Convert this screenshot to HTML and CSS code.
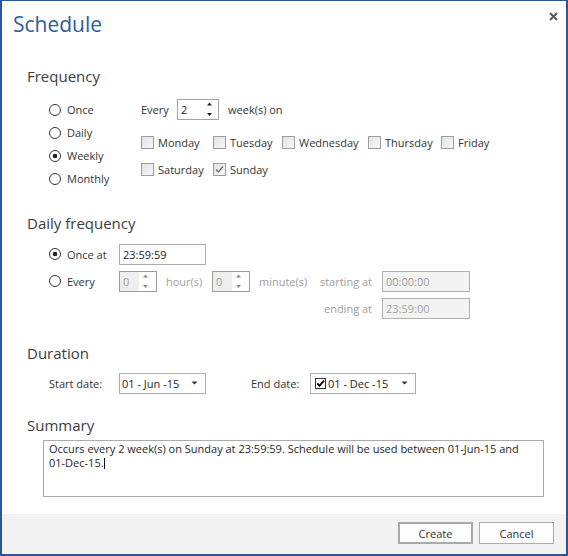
FILE: index.html
```html
<!DOCTYPE html>
<html lang="en">
<head>
<meta charset="utf-8">
<title>Schedule</title>
<link rel="stylesheet" href="styles.css">
</head>
<body>
<div class="dialog">
  <div class="titlebar">
    <h1 class="title">Schedule</h1>
    <svg class="close" width="9" height="9" viewBox="0 0 9 9" aria-label="Close"><path d="M1 1L8 8M8 1L1 8" stroke="#5a5a5a" stroke-width="2" fill="none"/></svg>
  </div>

  <div class="content">
    <section class="sec">
      <h2 class="sec-title">Frequency</h2>
      <div class="freq-body">
        <div class="radios">
          <label class="radio"><span class="rb"></span>Once</label>
          <label class="radio"><span class="rb"></span>Daily</label>
          <label class="radio"><span class="rb on"></span>Weekly</label>
          <label class="radio"><span class="rb"></span>Monthly</label>
        </div>
        <div class="weekly">
          <div class="every-row">
            <span class="every-lbl">Every</span>
            <div class="spin">
              <span class="spin-val">2</span>
              <svg class="spin-btns" width="14" height="19" viewBox="0 0 14 19"><path d="M3 5.5L5.5 2.5L8 5.5Z M3 13L5.5 16L8 13Z" fill="#222"/></svg>
            </div>
            <span class="week-lbl">week(s) on</span>
          </div>
          <div class="days">
            <label class="cb-item"><span class="cb"></span>Monday</label>
            <label class="cb-item"><span class="cb"></span>Tuesday</label>
            <label class="cb-item"><span class="cb"></span>Wednesday</label>
            <label class="cb-item"><span class="cb"></span>Thursday</label>
            <label class="cb-item"><span class="cb"></span>Friday</label>
            <label class="cb-item"><span class="cb"></span>Saturday</label>
            <label class="cb-item"><span class="cb"><svg width="11" height="11" viewBox="0 0 11 11"><path d="M2 5.5L4.3 8L9 2.5" stroke="#6e6e6e" stroke-width="1.4" fill="none"/></svg></span>Sunday</label>
          </div>
        </div>
      </div>
    </section>

    <section class="sec sec-daily">
      <h2 class="sec-title">Daily frequency</h2>
      <div class="daily-grid">
        <label class="radio"><span class="rb on"></span>Once at</label>
        <div class="tbox time">23:59:59</div>

        <label class="radio r2"><span class="rb"></span>Every</label>
        <div class="spin dis">
          <span class="spin-val">0</span>
          <svg class="spin-btns" width="17" height="19" viewBox="0 0 17 19"><path d="M4 5.5L6.5 2.5L9 5.5Z M4 13L6.5 16L9 13Z" fill="#8a8a8a"/></svg>
        </div>
        <span class="muted pad">hour(s)</span>
        <div class="spin dis">
          <span class="spin-val">0</span>
          <svg class="spin-btns" width="17" height="19" viewBox="0 0 17 19"><path d="M4 5.5L6.5 2.5L9 5.5Z M4 13L6.5 16L9 13Z" fill="#8a8a8a"/></svg>
        </div>
        <span class="muted pad">minute(s)</span>
        <span class="muted right">starting at</span>
        <div class="tbox dis">00:00:00</div>

        <span class="muted right c6">ending at</span>
        <div class="tbox dis">23:59:00</div>
      </div>
    </section>

    <section class="sec sec-dur">
      <h2 class="sec-title">Duration</h2>
      <div class="dur-row">
        <span class="dur-lbl">Start date:</span>
        <div class="date">
          <span class="date-val">01 - Jun -15</span>
          <svg class="dd" width="7" height="4" viewBox="0 0 7 4"><path d="M0.5 0.5H6.5L3.5 3.5Z" fill="#333"/></svg>
        </div>
        <span class="end-lbl">End date:</span>
        <div class="date end">
          <svg class="date-cb" width="11" height="11" viewBox="0 0 11 11"><rect x="0.5" y="0.5" width="10" height="10" fill="#fff" stroke="#333"/><path d="M2.3 5.3L4.4 7.8L9 2.6" stroke="#000" stroke-width="1.8" fill="none"/></svg>
          <span class="date-val">01 - Dec -15</span>
          <svg class="dd" width="7" height="4" viewBox="0 0 7 4"><path d="M0.5 0.5H6.5L3.5 3.5Z" fill="#333"/></svg>
        </div>
      </div>
    </section>

    <section class="sec sec-sum">
      <h2 class="sec-title">Summary</h2>
      <div class="summary-box">
        <p class="sum-line">Occurs every 2 week(s) on Sunday at 23:59:59. Schedule will be used between 01-Jun-15 and</p>
        <p class="sum-line">01-Dec-15.<span class="caret"></span></p>
      </div>
    </section>
  </div>

  <div class="footer">
    <button class="btn primary" type="button">Create</button>
    <button class="btn" type="button">Cancel</button>
  </div>
</div>
</body>
</html>
```

FILE: styles.css
```css
* { box-sizing: border-box; margin: 0; padding: 0; }
html, body { width: 568px; height: 556px; overflow: hidden; background: #fff; }
body {
  font-family: "Open Sans", "Noto Sans", sans-serif;
  font-size: 11px;
  line-height: 15px;
  color: #333;
}

.dialog {
  width: 568px;
  height: 556px;
  border: 2px solid #2b579a;
  border-top-width: 1px;
  display: flex;
  flex-direction: column;
  background: #fff;
}

/* title bar */
.titlebar {
  height: 45px;
  flex: none;
  padding: 9px 8px 0 11px;
  display: flex;
  justify-content: space-between;
  align-items: flex-start;
}
.title {
  font-size: 21px;
  line-height: 28px;
  font-weight: 400;
  color: #2e5c9e;
}
.close { display: block; margin-top: 2px; }

/* content */
.content { padding: 20px 0 0 25px; }
.sec-title {
  font-size: 15px;
  line-height: 20px;
  font-weight: 400;
  color: #3c3c3c;
}
.sec-daily { margin-top: 23px; }
.sec-dur { margin-top: 24px; }
.sec-sum { margin-top: 21px; }

/* radios & checkboxes */
.radio {
  display: flex;
  align-items: center;
  white-space: nowrap;
}
.rb {
  flex: none;
  width: 12px;
  height: 12px;
  border: 1px solid #333;
  border-radius: 50%;
  margin-right: 6px;
  background: #fff;
}
.rb.on { background: radial-gradient(circle, #222 0 2px, #fff 2.6px); }

.cb-item {
  display: flex;
  align-items: center;
  white-space: nowrap;
}
.cb {
  flex: none;
  width: 13px;
  height: 13px;
  border: 1px solid #9d9d9d;
  background: linear-gradient(135deg, #e2e2e2, #f7f7f7);
  margin-right: 4px;
  display: flex;
  align-items: center;
  justify-content: center;
}
.cb svg { display: block; }

/* frequency */
.freq-body {
  margin-top: 12px;
  padding-left: 22px;
  display: flex;
}
.radios {
  width: 92px;
  display: flex;
  flex-direction: column;
}
.radios .radio { height: 23px; }
.weekly { display: flex; flex-direction: column; }
.every-row {
  height: 22px;
  display: flex;
  align-items: center;
}
.every-lbl { width: 36px; }
.week-lbl { margin-left: 9px; }

.spin {
  width: 42px;
  height: 21px;
  border: 1px solid #a3a3a3;
  background: #fff;
  display: flex;
  align-items: stretch;
}
.spin-val { flex: 1; padding-left: 3px; line-height: 19px; color: #222; }
.spin-btns { display: block; flex: none; }
.spin.dis { width: 38px; border-color: #9c9c9c; }
.spin.dis .spin-val { background: #eeeeee; color: #a2a2a2; }

.days {
  margin-top: 11px;
  display: grid;
  grid-template-columns: 72px 69px 86px 73px auto;
  grid-auto-rows: 22px;
  row-gap: 5px;
}

/* daily frequency */
.daily-grid {
  margin-top: 10px;
  padding-left: 22px;
  display: grid;
  grid-template-columns: 70px 38px 55px 38px 69px 63px 88px;
  grid-auto-rows: 22px;
  row-gap: 5px;
  align-items: center;
}
.r2 { grid-column: 1; }
.c6 { grid-column: 6; }
.tbox {
  height: 21px;
  border: 1px solid #acacac;
  background: #fff;
  padding-left: 3px;
  line-height: 19px;
  color: #222;
  white-space: nowrap;
}
.tbox.time { grid-column: 2 / span 3; width: 87px; }
.tbox.dis { background: #f3f3f3; color: #a2a2a2; border-color: #b0b0b0; }
.muted { color: #9e9e9e; white-space: nowrap; }
.pad { padding-left: 9px; }
.right { text-align: right; padding-right: 10px; }

/* duration */
.dur-row {
  margin-top: 9px;
  padding-left: 22px;
  height: 22px;
  display: flex;
  align-items: center;
}
.dur-lbl { width: 70px; }
.end-lbl { width: 59px; margin-left: 45px; }
.date {
  width: 87px;
  height: 21px;
  border: 1px solid #acacac;
  background: #fff;
  display: flex;
  align-items: center;
  padding: 0 7px 0 2px;
  color: #1e1e1e;
}
.date-val { flex: 1; white-space: nowrap; }
.dd { display: block; flex: none; }
.date.end { width: 106px; padding-left: 4px; }
.date-cb { display: block; flex: none; margin-right: 2px; }

/* summary */
.summary-box {
  margin: 5px 0 0 16px;
  width: 501px;
  height: 57px;
  border: 1px solid #ababab;
  padding: 1px 5px;
  color: #1f1f1f;
}
.sum-line {
  line-height: 14px;
  white-space: nowrap;
}
.caret {
  display: inline-block;
  width: 1px;
  height: 11px;
  background: #000;
  vertical-align: -2px;
}

/* footer */
.footer {
  margin-top: auto;
  height: 40px;
  flex: none;
  background: #f3f3f3;
  display: flex;
  justify-content: flex-end;
  align-items: flex-start;
  gap: 6px;
  padding: 8px 12px 0 0;
}
.btn {
  width: 75px;
  height: 22px;
  border: 1px solid #adadad;
  background: #fdfdfd;
  font-family: "Open Sans", "Noto Sans", sans-serif;
  font-size: 11px;
  color: #333;
}
.btn.primary { border: 2px solid #a9a9a9; }
```
